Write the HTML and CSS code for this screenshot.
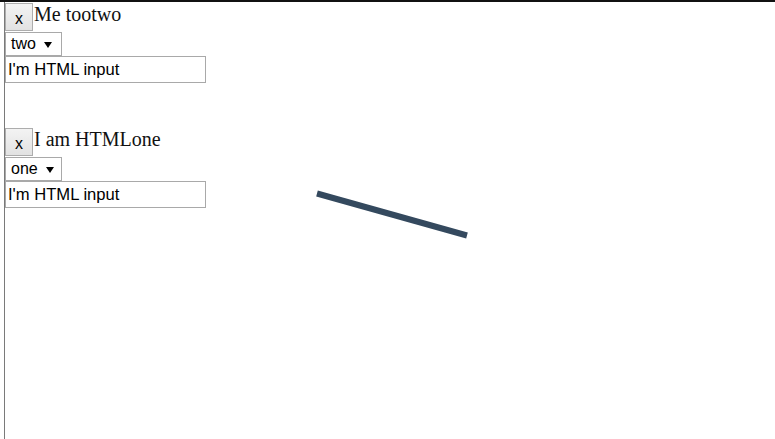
FILE: index.html
```html
<!DOCTYPE html>
<html>
<head>
<meta charset="utf-8">
<link rel="stylesheet" href="styles.css">
</head>
<body>
<div class="topbar"></div>
<div class="stage">
  <div class="item">
    <div class="head">
      <button class="close">x</button><span class="label">Me tootwo</span>
    </div>
    <div class="select"><span>two</span><svg class="arrow" width="8" height="6" viewBox="0 0 8 6"><path d="M0 0H8L4 6Z" fill="#000"/></svg></div>
    <div class="input">I'm HTML input</div>
  </div>
  <div class="item second">
    <div class="head">
      <button class="close">x</button><span class="label">I am HTMLone</span>
    </div>
    <div class="select"><span>one</span><svg class="arrow" width="8" height="6" viewBox="0 0 8 6"><path d="M0 0H8L4 6Z" fill="#000"/></svg></div>
    <div class="input">I'm HTML input</div>
  </div>
  <svg class="canvas" width="770" height="437" viewBox="0 0 770 437">
    <line x1="312" y1="191.5" x2="462" y2="233.5" stroke="#34495e" stroke-width="6"/>
  </svg>
</div>
</body>
</html>
```
FILE: styles.css
```css
html, body {
  margin: 0;
  padding: 0;
  background: #fff;
  overflow: hidden;
}
.topbar {
  height: 2px;
  background: #111;
}
.stage {
  position: relative;
  margin-left: 4px;
  border-left: 1px solid #7a7a7a;
  height: 437px;
  box-sizing: border-box;
  padding-top: 1px;
}
.item {
  display: flex;
  flex-direction: column;
  align-items: flex-start;
}
.item.second {
  margin-top: 45px;
}
.head {
  display: flex;
  align-items: center;
  height: 28px;
}
.close {
  width: 28px;
  height: 28px;
  margin: 0;
  padding: 0;
  border: 1px solid #adadad;
  background: linear-gradient(#f3f3f3, #e2e2e2);
  font-family: "Liberation Sans", Arial, sans-serif;
  font-size: 16px;
  color: #000;
  padding-top: 3px;
  box-sizing: border-box;
}
.label {
  font-family: "Liberation Serif", "Times New Roman", serif;
  font-size: 20px;
  color: #111;
  margin-left: 1px;
  line-height: 28px;
  position: relative;
  top: -3px;
}
.select {
  margin-top: 1px;
  width: 57px;
  height: 24px;
  box-sizing: border-box;
  border: 1px solid #a9a9a9;
  background: #fff;
  display: flex;
  align-items: center;
  padding-left: 5px;
  font-family: "Liberation Sans", Arial, sans-serif;
  font-size: 16px;
  color: #000;
}
.arrow {
  margin-left: 8px;
  margin-top: 1px;
}
.input {
  width: 201px;
  height: 27px;
  box-sizing: border-box;
  border: 1px solid #a9a9a9;
  padding-left: 2px;
  display: flex;
  align-items: center;
  font-family: "Liberation Sans", Arial, sans-serif;
  font-size: 16.6px;
  color: #000;
}
.canvas {
  position: absolute;
  left: 0;
  top: 0;
  pointer-events: none;
}
```
